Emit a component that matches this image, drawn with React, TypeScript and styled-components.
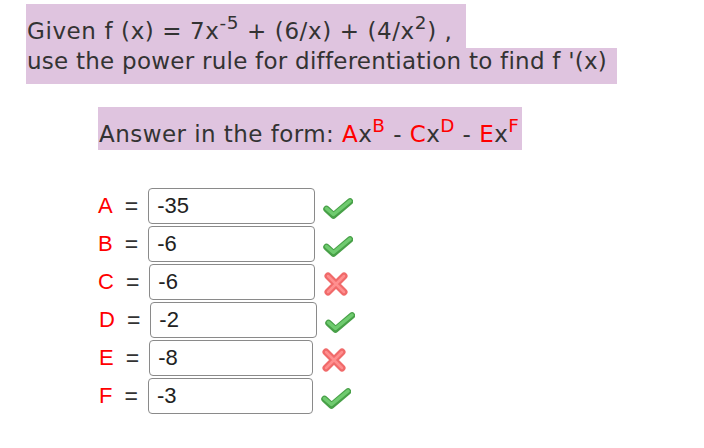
import styled, { createGlobalStyle } from 'styled-components';

const GlobalStyle = createGlobalStyle`
    body {
        margin: 0;
        background: #ffffff;
    }
`;

const Page = styled.div`
    padding: 4px 0 0 26px;
    font-family: "DejaVu Sans", Verdana, sans-serif;
    color: #333333;
`;

const Question = styled.div`
    display: flex;
    flex-direction: column;
    align-items: flex-start;
`;

const QuestionLine = styled.span<{ $first?: boolean }>`
    display: inline-block;
    background: #dfc4df;
    font-size: 23px;
    letter-spacing: ${(props) => (props.$first ? '0.6px' : '0.25px')};
    line-height: ${(props) => (props.$first ? '30px' : '27px')};
    padding: ${(props) => (props.$first ? '12px 13px 2px 1px' : '0 10px 9px 1px')};
    white-space: nowrap;
`;

const Sup = styled.sup<{ $red?: boolean }>`
    font-size: 0.8em;
    line-height: 0;
    vertical-align: 0.55em;
    color: ${(props) => (props.$red ? '#ff0000' : 'inherit')};
`;

const Form = styled.div`
    margin: 23px 0 0 72px;
`;

const AnswerBox = styled.div`
    display: inline-block;
    background: #dfc4df;
    font-size: 23px;
    letter-spacing: 0.45px;
    line-height: 30px;
    padding: 12px 3px 1px 1px;
    white-space: nowrap;
`;

const Red = styled.span`
    color: #ff0000;
`;

const Rows = styled.div`
    display: grid;
    grid-auto-rows: 38px;
    margin-top: 37px;
`;

const Row = styled.div`
    display: flex;
    align-items: center;
    font-family: "Liberation Sans", Arial, sans-serif;
`;

const Label = styled.span<{ $indent: number }>`
    color: #ff0000;
    font-size: 22px;
    margin-left: ${(props) => props.$indent}px;
`;

const Eq = styled.span`
    color: #333333;
    font-size: 23px;
    margin: 0 10px 0 12px;
`;

const Field = styled.div<{ $w: number }>`
    box-sizing: border-box;
    width: ${(props) => props.$w}px;
    height: 36px;
    border: 1px solid #8a8a8a;
    border-radius: 4px;
    padding-left: 8px;
    display: flex;
    align-items: center;
    font-size: 22px;
    color: #222222;
`;

const Mark = styled.span`
    display: flex;
    margin: 6px 0 0 8px;
`;

function Check() {
    return (
        <svg width="30" height="24" viewBox="0 0 30 24">
            <path d="M3.5 12 L10.5 18.5 L27 4.5" fill="none" stroke="#48a048" strokeWidth="6.5" strokeLinecap="round" strokeLinejoin="round" />
            <path d="M3.5 11.5 L10.5 17.5 L27 4" fill="none" stroke="#6fcb6f" strokeWidth="3.5" strokeLinecap="round" strokeLinejoin="round" />
        </svg>
    );
}

function Cross() {
    return (
        <svg width="28" height="26" viewBox="0 0 28 26">
            <g fill="none" strokeLinecap="round">
                <path d="M5 4 L21 20 M21 4 L5 20" stroke="#f06a6a" strokeWidth="7" />
                <path d="M5 4 L21 20 M21 4 L5 20" stroke="#ff8f8f" strokeWidth="2.5" />
            </g>
        </svg>
    );
}

const answers = [
    { label: 'A', value: '-35', ok: true, indent: 0, w: 167 },
    { label: 'B', value: '-6', ok: true, indent: 0, w: 167 },
    { label: 'C', value: '-6', ok: false, indent: 0, w: 166 },
    { label: 'D', value: '-2', ok: true, indent: 1, w: 167 },
    { label: 'E', value: '-8', ok: false, indent: 1, w: 164 },
    { label: 'F', value: '-3', ok: true, indent: 1, w: 165 },
];

export default function App() {
    return (
        <Page>
            <GlobalStyle />
            <Question>
                <QuestionLine $first>
                    Given f (x) = 7x<Sup>-5</Sup> + (6/x) + (4/x<Sup>2</Sup>) ,
                </QuestionLine>
                <QuestionLine>use the power rule for differentiation to find f '(x)</QuestionLine>
            </Question>
            <Form>
                <AnswerBox>
                    Answer in the form: <Red>A</Red>x<Sup $red>B</Sup> - <Red>C</Red>x<Sup $red>D</Sup> -{' '}
                    <Red>E</Red>x<Sup $red>F</Sup>
                </AnswerBox>
                <Rows>
                    {answers.map((a) => (
                        <Row key={a.label}>
                            <Label $indent={a.indent}>{a.label}</Label>
                            <Eq>=</Eq>
                            <Field $w={a.w}>{a.value}</Field>
                            <Mark>{a.ok ? <Check /> : <Cross />}</Mark>
                        </Row>
                    ))}
                </Rows>
            </Form>
        </Page>
    );
}
